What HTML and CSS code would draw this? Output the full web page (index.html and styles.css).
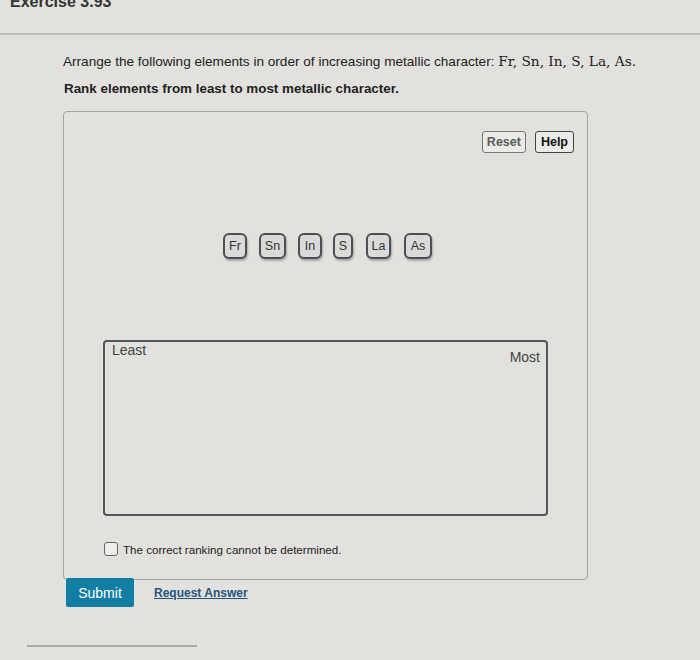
FILE: index.html
```html
<!DOCTYPE html>
<html>
<head>
<meta charset="utf-8">
<link rel="stylesheet" href="styles.css">
</head>
<body>
<div class="page">
  <div class="header"><h1 class="title">Exercise 3.93</h1></div>
  <div class="content">
    <p class="prompt">Arrange the following elements in order of increasing metallic character: <span class="math">Fr, Sn, In, S, La, As.</span></p>
    <p class="instr">Rank elements from least to most metallic character.</p>
    <div class="panel">
      <div class="tools">
        <button class="tool reset">Reset</button>
        <button class="tool help">Help</button>
      </div>
      <div class="tiles">
        <span class="tile t-fr">Fr</span>
        <span class="tile t-sn">Sn</span>
        <span class="tile t-in">In</span>
        <span class="tile t-s">S</span>
        <span class="tile t-la">La</span>
        <span class="tile t-as">As</span>
      </div>
      <div class="rank">
        <div class="rank-labels">
          <span class="least">Least</span>
          <span class="most">Most</span>
        </div>
      </div>
      <label class="check"><span class="box"></span>The correct ranking cannot be determined.</label>
    </div>
    <div class="actions">
      <button class="submit">Submit</button>
      <a class="request">Request Answer</a>
    </div>
  </div>
  <div class="footer-line"></div>
</div>
</body>
</html>
```
FILE: styles.css
```css
html, body {
  margin: 0;
  padding: 0;
}
body {
  background: #e2e1dd;
  font-family: "Liberation Sans", Arial, sans-serif;
  color: #1e1e1e;
  width: 700px;
  height: 660px;
  overflow: hidden;
}
.page {
  display: flex;
  flex-direction: column;
}
.header {
  height: 33px;
  border-bottom: 2px solid #bdbdb9;
  overflow: hidden;
}
.title {
  margin: -8px 0 0 10px;
  font-size: 16px;
  font-weight: bold;
  color: #333;
  line-height: 20px;
}
.content {
  padding: 16px 0 0 63px;
}
.prompt {
  margin: 0;
  font-size: 13.6px;
  line-height: 20px;
  color: #222;
}
.math {
  font-family: "DejaVu Serif", "Liberation Serif", serif;
  font-size: 13.7px;
}
.instr {
  margin: 7px 0 0 1px;
  font-size: 13.4px;
  font-weight: bold;
  line-height: 20px;
  color: #222;
}
.panel {
  margin-top: 12px;
  width: 525px;
  height: 469px;
  border: 1px solid #a3a3a0;
  border-radius: 4px;
  display: flex;
  flex-direction: column;
  box-sizing: border-box;
}
.tools {
  display: flex;
  justify-content: flex-end;
  gap: 9px;
  padding: 19px 13px 0 0;
}
.tool {
  font-family: "Liberation Sans", Arial, sans-serif;
  font-size: 12.5px;
  font-weight: bold;
  height: 22px;
  padding: 0 4px;
  border: 1px solid #777;
  border-radius: 3px;
  background: #ebebe8;
  line-height: 20px;
}
.reset { color: #5a5a5a; }
.help { color: #111; border-color: #444; padding: 0 5px; }
.tiles {
  display: flex;
  gap: 12px;
  margin: 80px 0 0 159px;
}
.tile {
  height: 26px;
  box-sizing: border-box;
  border: 2px solid #4e4e58;
  border-radius: 6px;
  background: #dadad8;
  font-size: 12.5px;
  line-height: 22px;
  text-align: center;
  color: #333;
  box-shadow: 1px 2px 2px rgba(0,0,0,0.25);
}
.t-fr { width: 24px; }
.t-sn { width: 27px; }
.t-in { width: 24px; }
.t-s { width: 20px; margin-left: -1px; }
.t-la { width: 25px; margin-left: 1px; }
.t-as { width: 28px; margin-left: 1px; }
.rank {
  margin: 81px 0 0 39px;
  width: 445px;
  height: 176px;
  box-sizing: border-box;
  border: 2px solid #55555a;
  border-radius: 4px;
}
.rank-labels {
  display: flex;
  justify-content: space-between;
  padding: 0 6px 0 7px;
  font-size: 14px;
  color: #444;
}
.least { line-height: 16px; }
.most { margin-top: 7px; line-height: 16px; }
.check {
  display: flex;
  align-items: center;
  gap: 5px;
  margin: 26px 0 0 40px;
  font-size: 11.6px;
  color: #222;
}
.box {
  width: 12px;
  height: 12px;
  border: 1px solid #666;
  border-radius: 3px;
  background: #eeeeec;
}
.actions {
  display: flex;
  align-items: center;
  gap: 20px;
  margin-top: -2px;
  margin-left: 3px;
}
.submit {
  width: 68px;
  height: 29px;
  border: none;
  border-radius: 2px;
  background: #137ea3;
  color: #fff;
  font-family: "Liberation Sans", Arial, sans-serif;
  font-size: 14px;
}
.request {
  color: #25557e;
  font-weight: bold;
  font-size: 12px;
  text-decoration: underline;
}
.footer-line {
  margin: 38px 0 0 27px;
  width: 170px;
  height: 2px;
  background: #aaa9a5;
}
```
